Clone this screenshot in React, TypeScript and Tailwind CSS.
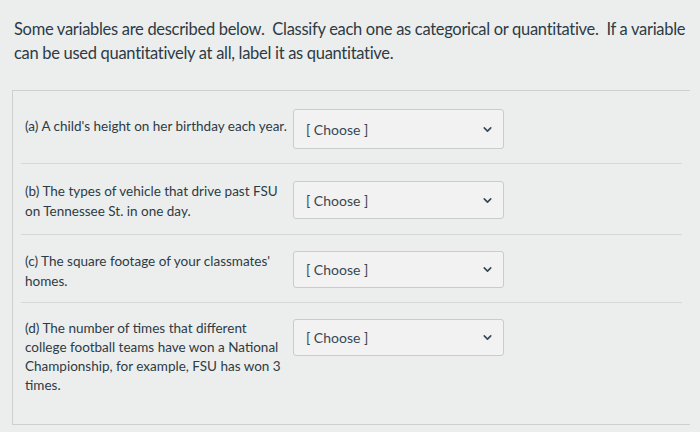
import { ChevronDown } from 'lucide-react';

const rows = [
  { label: "(a) A child's height on her birthday each year.", pt: 'pt-[18px]', pb: 'pb-[14px]', lt: 'mt-[7px] leading-[20px]', h: 'h-[40px]' },
  { label: '(b) The types of vehicle that drive past FSU on Tennessee St. in one day.', pt: 'pt-[17px]', pb: 'pb-[13px]', lt: 'mt-0 leading-[20px]', h: 'h-[38px]' },
  { label: "(c) The square footage of your classmates' homes.", pt: 'pt-[16px]', pb: 'pb-[11px]', lt: 'mt-0 leading-[20px]', h: 'h-[37px]' },
  {
    label: '(d) The number of times that different college football teams have won a National Championship, for example, FSU has won 3 times.',
    pt: 'pt-[16px]',
    pb: 'pb-[29px]',
    lt: 'mt-0 leading-[19px]',
    h: 'h-[37px]',
  },
];

function Select({ h }: { h: string }) {
  return (
    <div className={`flex w-[211px] ${h} shrink-0 items-center justify-between rounded-[3px] border border-[#c9cccc] bg-[#f1f2f1] pl-[12px] pr-[9px]`}>
      <span className="text-[14px] text-[#3a4650]">[ Choose ]</span>
      <ChevronDown size={13} strokeWidth={3} className="text-[#3a4650]" />
    </div>
  );
}

export default function App() {
  return (
    <div className="h-[432px] w-[700px] overflow-hidden bg-[#eceeed] font-['Lato',sans-serif] text-[#2d3b45]">
      <div className="px-[14px] pt-[17px] text-[16.5px] leading-[24px] tracking-[-0.3px]">
        Some variables are described below. &nbsp;Classify each one as categorical or quantitative. &nbsp;If a variable can be used quantitatively at all, label it as quantitative.
      </div>
      <div className="ml-[12px] mr-[10px] mt-[25px] border-b border-l border-t border-[#cdd0d0]">
        {rows.map((r, i) => (
          <div key={i} className={i > 0 ? 'mx-[8px] border-t border-[#d6d8d8]' : 'mx-[8px]'}>
            <div className={`flex items-start gap-[4px] pl-[4px] ${r.pt} ${r.pb}`}>
              <div className={`w-[264px] shrink-0 text-[13.5px] ${r.lt}`}>{r.label}</div>
              <Select h={r.h} />
            </div>
          </div>
        ))}
      </div>
    </div>
  );
}
